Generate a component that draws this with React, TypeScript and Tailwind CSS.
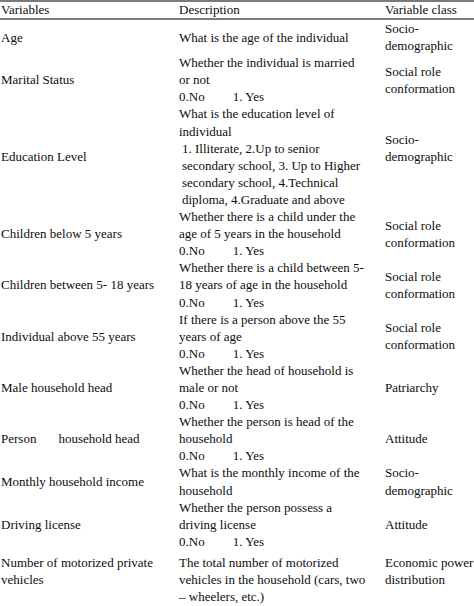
import React from 'react';

type Row = {
  variable: React.ReactNode;
  desc: React.ReactNode[];
  klass: string[];
  lastRow?: boolean;
  classUp?: boolean;
};

function YesNo() {
  return (
    <>
      0.No<span className="ml-[28px]">1. Yes</span>
    </>
  );
}

const rows: Row[] = [
  { variable: 'Age', desc: ['What is the age of the individual'], klass: ['Socio-', 'demographic'] },
  {
    variable: 'Marital Status',
    desc: ['Whether the individual is married', 'or not', <YesNo />],
    klass: ['Social role', 'conformation'],
  },
  {
    variable: 'Education Level',
    desc: [
      'What is the education level of',
      'individual',
      <span className="pl-[3px]">1. Illiterate, 2.Up to senior</span>,
      <span className="pl-[3px]">secondary school, 3. Up to Higher</span>,
      <span className="pl-[3px]">secondary school, 4.Technical</span>,
      <span className="pl-[3px]">diploma, 4.Graduate and above</span>,
    ],
    klass: ['Socio-', 'demographic'],
    classUp: true,
  },
  {
    variable: 'Children below 5 years',
    desc: ['Whether there is a child under the', 'age of 5 years in the household', <YesNo />],
    klass: ['Social role', 'conformation'],
  },
  {
    variable: 'Children between 5- 18 years',
    desc: ['Whether there is a child between 5-', '18 years of age in the household', <YesNo />],
    klass: ['Social role', 'conformation'],
  },
  {
    variable: 'Individual above 55 years',
    desc: ['If there is a person above the 55', 'years of age', <YesNo />],
    klass: ['Social role', 'conformation'],
  },
  {
    variable: 'Male household head',
    desc: ['Whether the head of household is', 'male or not', <YesNo />],
    klass: ['Patriarchy'],
  },
  {
    variable: (
      <>
        Person<span className="ml-[22px]">household head</span>
      </>
    ),
    desc: ['Whether the person is head of the', 'household', <YesNo />],
    klass: ['Attitude'],
  },
  {
    variable: 'Monthly household income',
    desc: ['What is the monthly income of the', 'household'],
    klass: ['Socio-', 'demographic'],
  },
  {
    variable: 'Driving license',
    desc: ['Whether the person possess a', 'driving license', <YesNo />],
    klass: ['Attitude'],
  },
  {
    variable: (
      <>
        Number of motorized private
        <br />
        vehicles
      </>
    ),
    desc: ['The total number of motorized', 'vehicles in the household (cars, two', '\u2013 wheelers, etc.)'],
    klass: ['Economic power', 'distribution'],
    lastRow: true,
  },
];

export default function App() {
  return (
    <div className="w-[474px] h-[606px] overflow-hidden bg-white text-[#0d0d0d] text-[13px] leading-[17.1px] font-['Liberation_Serif','Times_New_Roman',serif]">
      <table className="w-[474px] border-collapse table-fixed">
        <colgroup>
          <col className="w-[179px]" />
          <col className="w-[206px]" />
          <col className="w-[89px]" />
        </colgroup>
        <thead>
          <tr className="border-t-2 border-b-2 border-[#7a7a7a]">
            <th className="p-0 pl-px font-normal text-left align-middle leading-[16px] whitespace-nowrap">Variables</th>
            <th className="p-0 font-normal text-left align-middle leading-[16px] whitespace-nowrap">Description</th>
            <th className="p-0 font-normal text-left align-middle leading-[16px] whitespace-nowrap">Variable class</th>
          </tr>
        </thead>
        <tbody>
          {rows.map((r, i) => (
            <tr key={i}>
              <td className={r.lastRow ? 'p-0 pt-[4px] pl-px align-top whitespace-nowrap' : 'p-0 pl-px align-middle whitespace-nowrap'}>
                {r.variable}
              </td>
              <td className={r.lastRow ? 'p-0 pt-[4px] align-top whitespace-nowrap' : 'p-0 align-middle whitespace-nowrap'}>
                {r.desc.map((d, j) => (
                  <div key={j}>{d}</div>
                ))}
              </td>
              <td
                className={
                  r.lastRow
                    ? 'p-0 pt-[4px] align-top whitespace-nowrap'
                    : r.classUp
                      ? 'p-0 pb-[17px] align-middle whitespace-nowrap'
                      : 'p-0 align-middle whitespace-nowrap'
                }
              >
                {r.klass.map((k, j) => (
                  <div key={j}>{k}</div>
                ))}
              </td>
            </tr>
          ))}
        </tbody>
      </table>
    </div>
  );
}
